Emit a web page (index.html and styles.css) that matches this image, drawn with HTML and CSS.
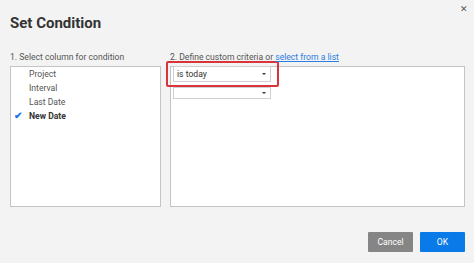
FILE: index.html
```html
<!DOCTYPE html>
<html lang="en">
<head>
    <meta charset="UTF-8">
    <title>Set Condition</title>
    <link rel="stylesheet" href="styles.css">
</head>
<body>
<div class="dialog">
    <button type="button" class="close">&#x2715;</button>
    <h1>Set Condition</h1>
    <div class="columns">
        <div class="col left">
            <div class="label">1. Select column for condition</div>
            <ul class="list">
                <li>Project</li>
                <li>Interval</li>
                <li>Last Date</li>
                <li class="selected"><span class="check">&#x2714;</span>New Date</li>
            </ul>
        </div>
        <div class="col right">
            <div class="label">2. Define custom criteria or <a href="#">select from a list</a></div>
            <div class="criteria">
                <div class="highlight">
                    <div class="select">is today<span class="caret"></span></div>
                </div>
                <div class="select second"><span class="caret"></span></div>
            </div>
        </div>
    </div>
    <div class="footer">
        <button type="button" class="button grey">Cancel</button>
        <button type="button" class="button blue">OK</button>
    </div>
</div>
</body>
</html>
```

FILE: styles.css
```css
html {
    background: #f3f3f3;
}
body {
    margin: 0;
    font-family: Roboto, "Liberation Sans", Arial, sans-serif;
    color: #333;
}
.dialog {
    position: relative;
    height: 263px;
    padding: 0 9px 0 10px;
    box-sizing: border-box;
}
.close {
    position: absolute;
    top: 4px;
    right: 6px;
    border: none;
    background: none;
    font-size: 9px;
    color: #555;
    padding: 0;
    cursor: pointer;
}
h1 {
    margin: 0;
    padding-top: 14px;
    font-size: 15px;
    font-weight: bold;
    color: #333;
    line-height: 18px;
}
.columns {
    display: flex;
    margin-top: 19px;
    gap: 9px;
}
.col.left {
    width: 151px;
}
.col.right {
    flex: 1;
}
.label {
    font-size: 8.6px;
    color: #555;
    line-height: 12px;
    height: 15px;
}
.label a {
    color: #2a7de1;
}
.list, .criteria {
    margin: 0;
    padding: 0;
    list-style: none;
    background: #fff;
    border: 1px solid #c4c4c4;
    height: 141px;
    box-sizing: border-box;
}
.list li {
    font-size: 8.6px;
    line-height: 14px;
    color: #555;
    padding-left: 18px;
    position: relative;
}
.list li.selected {
    font-weight: bold;
    color: #333;
}
.check {
    position: absolute;
    left: 3px;
    top: 0;
    color: #1a73e8;
    font-size: 10px;
}
.criteria {
    padding: 0 0 0 2px;
}
.highlight {
    width: 99px;
    border: 2px solid #d9343a;
    border-radius: 2px;
    padding: 3px 5px;
    margin-left: -7px;
    margin-top: -6px;
}
.select {
    width: 98px;
    height: 16px;
    box-sizing: border-box;
    border: 1px solid #d0d0d0;
    background: #fff;
    font-size: 8.6px;
    line-height: 14px;
    padding-left: 3px;
    position: relative;
    color: #333;
}
.select.second {
    height: 12px;
}
.caret {
    position: absolute;
    right: 4px;
    top: 6px;
    border-left: 2px solid transparent;
    border-right: 2px solid transparent;
    border-top: 2px solid #333;
}
.select.second .caret {
    top: 4px;
}
.footer {
    display: flex;
    justify-content: flex-end;
    gap: 7px;
    margin-top: 25px;
}
.button {
    width: 45px;
    height: 20px;
    border: none;
    border-radius: 1px;
    font-family: Roboto, "Liberation Sans", Arial, sans-serif;
    font-size: 8.6px;
    color: #fff;
    cursor: pointer;
    padding: 0;
}
.button.grey {
    background-color: #858585;
}
.button.blue {
    background-color: #0a7ae8;
}
```
